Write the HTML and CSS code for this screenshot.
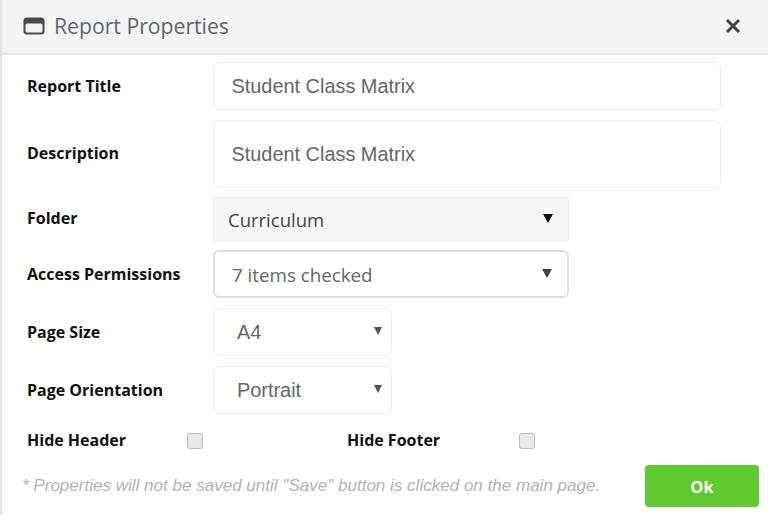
FILE: index.html
```html
<!DOCTYPE html>
<html lang="en">
<head>
<meta charset="utf-8">
<title>Report Properties</title>
<link rel="stylesheet" href="styles.css">
</head>
<body>
<div class="dialog">
  <header class="head">
    <svg class="win-icon" width="22" height="18" viewBox="0 0 22 18"><rect x="0.5" y="0.5" width="21" height="17" rx="3.5" fill="#4a4a4a"/><rect x="2.5" y="6.5" width="17" height="9" rx="1.5" fill="#f0f0f0"/></svg>
    <h1 class="title">Report Properties</h1>
    <svg class="close" width="16" height="16" viewBox="0 0 16 16"><path d="M2 2L14 14M14 2L2 14" stroke="#444" stroke-width="3" fill="none"/></svg>
  </header>
  <form class="form">
    <div class="row row-title">
      <label class="label">Report Title</label>
      <div class="field field-wide h48">Student Class Matrix</div>
    </div>
    <div class="row row-desc">
      <label class="label label-up">Description</label>
      <div class="field field-wide h68">Student Class Matrix</div>
    </div>
    <div class="row row-folder">
      <label class="label label-up">Folder</label>
      <div class="field field-mid h44 folder">Curriculum<span class="caret caret-lg"></span></div>
    </div>
    <div class="row row-access">
      <label class="label">Access Permissions</label>
      <div class="field field-mid h48 access">7 items checked<span class="caret caret-lg caret-grey"></span></div>
    </div>
    <div class="row row-size">
      <label class="label">Page Size</label>
      <div class="field field-small h48">A4<span class="caret caret-sm"></span></div>
    </div>
    <div class="row row-orient">
      <label class="label">Page Orientation</label>
      <div class="field field-small h48">Portrait<span class="caret caret-sm"></span></div>
    </div>
    <div class="row row-check">
      <label class="label check-label">Hide Header</label>
      <span class="checkbox"></span>
      <label class="label check-label second">Hide Footer</label>
      <span class="checkbox"></span>
    </div>
    <div class="foot">
      <p class="note">* Properties will not be saved until "Save" button is clicked on the main page.</p>
      <button class="ok" type="button">Ok</button>
    </div>
  </form>
</div>
</body>
</html>
```

FILE: styles.css
```css
* { box-sizing: border-box; }
html, body { margin: 0; padding: 0; }
body { width: 768px; height: 515px; overflow: hidden; background: #fff; }
.dialog { height: 515px; border-left: 2px solid #e4e4e4; font-family: "Open Sans", sans-serif; }
.head { height: 55px; background: #f4f4f4; border-bottom: 2px solid #e6e6e6; display: flex; align-items: center; padding: 0 27px 2px 21px; }
.win-icon { margin-right: 9px; }
.title { flex: 1; margin: 0; font-size: 21.2px; font-weight: 400; color: #5c6670; }
.form { padding: 7px 0 0 25px; }
.row { display: flex; align-items: center; }
.row-desc { margin-top: 10px; }
.row-folder { margin-top: 9px; }
.row-access { margin-top: 9px; }
.row-size { margin-top: 10px; }
.row-orient { margin-top: 10px; }
.row-check { margin-top: 14px; height: 24px; }
.label { width: 186px; font-size: 16px; font-weight: 700; color: #111; flex: none; padding-bottom: 1px; }
.label-up { padding-bottom: 3px; }
.field { display: flex; align-items: center; justify-content: space-between; border: 1.5px solid #eee; border-radius: 6px; background: #fff; font-family: "Liberation Sans", sans-serif; font-size: 19.9px; color: #666; padding: 0 17.5px; }
.h48 { height: 48px; }
.h44 { height: 44px; }
.h68 { height: 68px; }
.field-wide { width: 508px; }
.field-mid { width: 356px; }
.field-small { width: 179px; padding: 0 9px 0 23px; }
.folder { background: #f7f7f7; border-radius: 0; font-family: "Open Sans", sans-serif; font-size: 18.5px; color: #444; padding: 0 15px 0 14px; }
.access { border: 2px solid #ddd; font-family: "Open Sans", sans-serif; font-size: 18.75px; padding: 0 15px 0 17px; }
.caret { display: block; width: 0; height: 0; border-style: solid; border-color: #111 transparent transparent; position: relative; top: -1px; }
.caret-lg { border-width: 9px 5.5px 0; }
.caret-sm { border-width: 8px 4px 0; border-top-color: #555; }
.caret-grey { border-top-color: #444; }
.check-label { width: 160px; }
.second { width: 172px; }
.checkbox { width: 16px; height: 16px; border: 1.5px solid #bbb; border-radius: 3px; background: #e9e9e9; position: relative; top: 1px; }
.row-check .checkbox:nth-child(2) { margin-right: 144px; }
.foot { display: flex; align-items: center; justify-content: space-between; margin: 13px 9px 0 -5px; }
.note { margin: 0; font-family: "Liberation Sans", sans-serif; font-style: italic; font-size: 17.05px; color: #b3b3b3; }
.ok { width: 114px; height: 42px; background: #60cb30; border: 0; border-radius: 4px; color: #fff; font-family: "Open Sans", sans-serif; font-size: 16.5px; font-weight: 700; }
```
